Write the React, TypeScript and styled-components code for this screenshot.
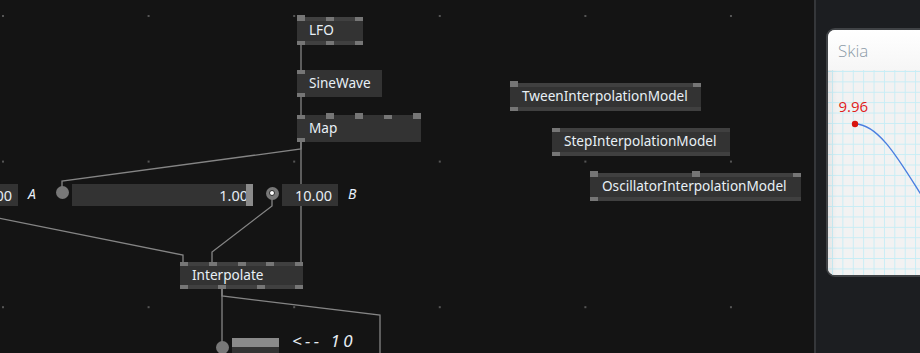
import React from 'react'
import styled, { createGlobalStyle } from 'styled-components'

type PinKind = 'n' | 't'

type NodeSpec = {
  label: string
  x: number
  y: number
  w: number
  h: number
  top: PinKind[]
  bottom: PinKind[]
  strips?: boolean
}

const nodes: NodeSpec[] = [
  { label: 'LFO', x: 297, y: 17, w: 66, h: 28, top: ['t', 'n', 'n'], bottom: ['n', 'n', 'n'], strips: true },
  { label: 'SineWave', x: 297, y: 70, w: 85, h: 27, top: ['n'], bottom: ['n'] },
  { label: 'Map', x: 297, y: 115, w: 124, h: 27, top: ['n', 't', 't', 'n', 't'], bottom: ['n'] },
  { label: 'Interpolate', x: 180, y: 262, w: 123, h: 27, top: ['n', 'n', 'n', 'n', 'n'], bottom: ['n', 'n', 'n', 'n'], strips: true },
  { label: 'TweenInterpolationModel', x: 510, y: 83, w: 191, h: 28, top: ['t', 'n'], bottom: ['n'], strips: true },
  { label: 'StepInterpolationModel', x: 552, y: 128, w: 178, h: 28, top: ['n'], bottom: ['n'], strips: true },
  { label: 'OscillatorInterpolationModel', x: 590, y: 173, w: 211, h: 28, top: ['t', 't', 'n'], bottom: ['n'], strips: true },
]

// polylines between pins
const wires: string[] = [
  '301,45 301,70',
  '301,97 301,115',
  '301,142 301,184',
  '301,142 301,149 62,181 62,188',
  '301,206 301,262',
  '272,199 272,206 212,252 212,262',
  '-10,216.3 183,255 183,262',
  '222,289 222,342',
  '222,289 222,296 380,315 380,360',
]

const GlobalStyle = createGlobalStyle`
  html, body {
    margin: 0;
    padding: 0;
    background: #141414;
  }
  body {
    font-family: 'Noto Sans', 'Open Sans', sans-serif;
  }
`

const Screen = styled.div`
  display: flex;
  width: 920px;
  height: 353px;
  overflow: hidden;
`

const Patch = styled.div`
  position: relative;
  flex: 0 0 814px;
  height: 100%;
  overflow: hidden;
  background-color: #141414;
  background-image: radial-gradient(circle at 1px 1px, #555 0.8px, transparent 1.3px);
  background-size: 145.6px 145.6px;
  background-position: 2px 15px;
`

const Wires = styled.svg`
  position: absolute;
  left: 0;
  top: 0;
  width: 814px;
  height: 353px;
`

const NodeBox = styled.div<{ $x: number; $y: number; $w: number; $h: number; $strips?: boolean }>`
  position: absolute;
  left: ${p => p.$x}px;
  top: ${p => p.$y}px;
  width: ${p => p.$w}px;
  height: ${p => p.$h}px;
  box-sizing: border-box;
  display: flex;
  align-items: center;
  padding: 0 0 2px 12px;
  background: ${p =>
    p.$strips
      ? 'linear-gradient(#404040 0 4px, #333 4px calc(100% - 4px), #404040 calc(100% - 4px))'
      : '#333'};
  color: #e8f0f6;
  font-size: 13.6px;
  line-height: 1;
  white-space: nowrap;
`

const PinRow = styled.div<{ $side: 'top' | 'bottom' }>`
  position: absolute;
  left: 0;
  right: 0;
  display: flex;
  justify-content: space-between;
  align-items: ${p => (p.$side === 'top' ? 'flex-end' : 'flex-start')};
  ${p => (p.$side === 'top' ? 'top: -2px; height: 6px;' : 'bottom: 0; height: 4px;')}
`

const Pin = styled.span<{ $tall?: boolean }>`
  width: 8px;
  height: ${p => (p.$tall ? 6 : 4)}px;
  background: #767676;
`

const ValueBox = styled.div<{ $x: number; $y: number; $w: number }>`
  position: absolute;
  left: ${p => p.$x}px;
  top: ${p => p.$y}px;
  width: ${p => p.$w}px;
  height: 22px;
  box-sizing: border-box;
  padding-right: 6px;
  background: #333;
  color: #e6edf3;
  font-size: 14.5px;
  line-height: 22px;
  text-align: right;
`

const SliderBox = styled(ValueBox)`
  padding-right: 5px;
  &::after {
    content: '';
    position: absolute;
    right: 0;
    top: 0;
    bottom: 0;
    width: 7px;
    background: #8a8a8a;
  }
`

const BarBox = styled.div<{ $x: number; $y: number; $w: number }>`
  position: absolute;
  left: ${p => p.$x}px;
  top: ${p => p.$y}px;
  width: ${p => p.$w}px;
  height: 22px;
  background: linear-gradient(#8a8a8a 0 8.5px, #333 8.5px);
`

const PinDot = styled.span<{ $x: number; $y: number }>`
  position: absolute;
  left: ${p => p.$x - 6.5}px;
  top: ${p => p.$y - 6.5}px;
  width: 13px;
  height: 13px;
  border-radius: 50%;
  background: #787878;
`

const RingPin = styled(PinDot)`
  display: flex;
  align-items: center;
  justify-content: center;
  &::after {
    content: '';
    width: 4px;
    height: 4px;
    border-radius: 50%;
    background: #fff;
    border: 1.5px solid #2a2a2a;
  }
`

const PinLabel = styled.span<{ $x: number; $y: number }>`
  position: absolute;
  left: ${p => p.$x}px;
  top: ${p => p.$y}px;
  color: #e6eef8;
  font-size: 14px;
  font-style: italic;
  line-height: 1;
`

const Comment = styled.span`
  position: absolute;
  left: 292px;
  top: 332px;
  color: #e6ecf2;
  font-size: 17px;
  font-style: italic;
  letter-spacing: 3.4px;
  line-height: 1;
  white-space: pre;
`

const Divider = styled.div`
  flex: 0 0 2px;
  background: #35373a;
`

const Side = styled.div`
  flex: 1;
  background: #1c1e21;
  padding: 28px 0 0 10px;
`

const RenderWindow = styled.div`
  width: 320px;
  height: 249px;
  box-sizing: border-box;
  border: 2px solid #404346;
  border-radius: 9px;
  overflow: hidden;
  display: flex;
  flex-direction: column;
  background: #f2f2f2;
`

const TitleBar = styled.div`
  height: 40px;
  flex: 0 0 40px;
  display: flex;
  align-items: center;
  padding-left: 10px;
  background: linear-gradient(#ffffff, #f6f6f6);
  color: #8b9aa7;
  font-family: 'Open Sans', 'Noto Sans', sans-serif;
  font-size: 17px;
  font-weight: 300;
`

const Plot = styled.div`
  position: relative;
  flex: 1;
  background-color: #f2f2f2;
  background-image:
    linear-gradient(90deg, rgba(0, 0, 0, 0.05), rgba(0, 0, 0, 0) 9px),
    linear-gradient(to right, #c8edf5 1px, transparent 1px),
    linear-gradient(to bottom, #c8edf5 1px, transparent 1px);
  background-size: 100% 100%, 10.4px 10.4px, 10.4px 10.4px;
  background-position: 0 0, 4px 1px, 4px 1px;
`

const Chart = styled.svg`
  position: absolute;
  inset: 0;
  width: 100%;
  height: 100%;
`

const PatchNode = ({ label, x, y, w, h, top, bottom, strips }: NodeSpec) => (
  <NodeBox $x={x} $y={y} $w={w} $h={h} $strips={strips}>
    <PinRow $side="top">
      {top.map((k, i) => (
        <Pin key={i} $tall={k === 't'} />
      ))}
    </PinRow>
    {label}
    <PinRow $side="bottom">
      {bottom.map((k, i) => (
        <Pin key={i} $tall={k === 't'} />
      ))}
    </PinRow>
  </NodeBox>
)

const App = () => (
  <Screen>
    <GlobalStyle />
    <Patch>
      <Wires viewBox="0 0 814 353">
        {wires.map((pts, i) => (
          <polyline key={i} points={pts} fill="none" stroke="#858585" strokeWidth={1.3} />
        ))}
      </Wires>

      {nodes.map(n => (
        <PatchNode key={n.label} {...n} />
      ))}

      <ValueBox $x={-50} $y={184} $w={68}>0.00</ValueBox>
      <PinLabel $x={28} $y={187}>A</PinLabel>
      <PinDot $x={62} $y={192} />
      <SliderBox $x={72} $y={184} $w={181}>1.00</SliderBox>
      <RingPin $x={272} $y={193} />
      <ValueBox $x={282} $y={184} $w={56}>10.00</ValueBox>
      <PinLabel $x={348} $y={187}>B</PinLabel>

      <PinDot $x={222} $y={347} />
      <BarBox $x={232} $y={338} $w={47} />
      <Comment>{'<-- 10'}</Comment>
    </Patch>
    <Divider />
    <Side>
      <RenderWindow>
        <TitleBar>Skia</TitleBar>
        <Plot>
          <Chart>
            <path d="M27 54 C50 54 70 88 92 123 L112 156" fill="none" stroke="#4a7ee0" strokeWidth={1.4} />
            <circle cx={27} cy={54} r={3.2} fill="#d8150f" />
            <text x={10.5} y={41.5} fill="#e0201a" fontSize={15} fontFamily="'Open Sans', 'Noto Sans', sans-serif">
              9.96
            </text>
          </Chart>
        </Plot>
      </RenderWindow>
    </Side>
  </Screen>
)

export default App
